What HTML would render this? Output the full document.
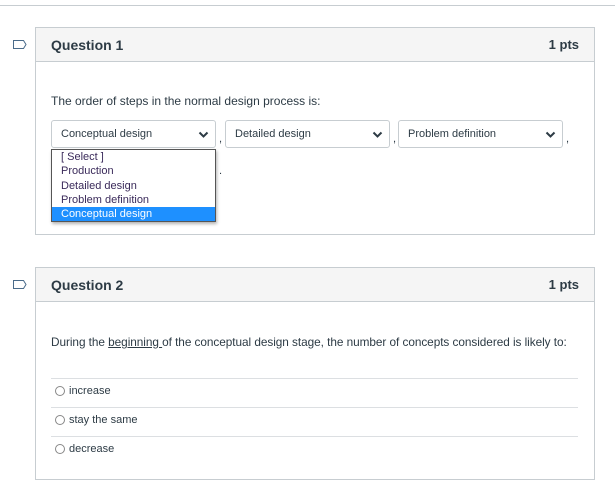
<!DOCTYPE html>
<html><head><style>
*{margin:0;padding:0;box-sizing:border-box}
body{width:615px;height:485px;background:#fff;font-family:"Liberation Sans",sans-serif;color:#2d3b45;position:relative;overflow:hidden}
.abs{position:absolute}
.box{position:absolute;left:35px;width:560px;border:1px solid #c7cdd1;}
.hdr{height:34px;background:#f5f5f5;border-bottom:1px solid #c7cdd1;position:relative}
.hdr .t{position:absolute;left:15px;top:9px;font-size:14px;font-weight:bold}
.hdr .p{position:absolute;right:15px;top:9px;font-size:13px;font-weight:bold}
.sel{position:absolute;top:120px;height:28px;border:1px solid #c7cdd1;border-radius:3px;background:#fff;font-size:11px;padding:7px 9px;color:#2d3b45}
.sel svg{position:absolute;right:6px;top:10px}
.dd{position:absolute;left:51px;top:149px;width:165px;height:73px;border:1px solid #555;background:#fff;font-size:11px;box-shadow:1px 2px 3px rgba(0,0,0,.3)}
.dd div{height:14.3px;line-height:14px;padding-left:9px;color:#3a2a5a}
.dd .h{background:#1e90ff;color:#fff}
.bm{position:absolute;left:13px;width:14px;height:9px}
.ln{position:absolute;left:51px;width:527px;height:1px;background:#dcdfe2}
.opt{position:absolute;left:69px;font-size:11px}
.rad{position:absolute;left:55px;width:10px;height:10px;border:1px solid #888;border-radius:50%}
</style></head><body>
<div class="abs" style="left:0;top:5px;width:615px;height:1px;background:#c7cdd1"></div>
<svg class="bm" style="top:40px" viewBox="0 0 14 9"><path d="M0.5 0.5H10.5L13 4.5L10.5 8.5H0.5Z" fill="none" stroke="#4a6b8a" stroke-width="1"/></svg>
<div class="box" style="top:27px;height:208px"><div class="hdr"><span class="t">Question 1</span><span class="p">1 pts</span></div></div>
<div class="abs" style="left:51px;top:94px;font-size:12px">The order of steps in the normal design process is:</div>
<div class="sel" style="left:51px;width:165px">Conceptual design<svg width="11" height="8" viewBox="0 0 11 8"><path d="M1.5 1.5L5.5 5.5L9.5 1.5" fill="none" stroke="#2d3b45" stroke-width="2"/></svg></div>
<div class="abs" style="left:219px;top:133px;font-size:11px">,</div>
<div class="sel" style="left:225px;width:165px">Detailed design<svg width="11" height="8" viewBox="0 0 11 8"><path d="M1.5 1.5L5.5 5.5L9.5 1.5" fill="none" stroke="#2d3b45" stroke-width="2"/></svg></div>
<div class="abs" style="left:393px;top:133px;font-size:11px">,</div>
<div class="sel" style="left:398px;width:165px">Problem definition<svg width="11" height="8" viewBox="0 0 11 8"><path d="M1.5 1.5L5.5 5.5L9.5 1.5" fill="none" stroke="#2d3b45" stroke-width="2"/></svg></div>
<div class="abs" style="left:566px;top:133px;font-size:11px">,</div>
<div class="abs" style="left:219px;top:165px;font-size:11px">.</div>
<div class="dd"><div>[ Select ]</div><div>Production</div><div>Detailed design</div><div>Problem definition</div><div class="h">Conceptual design</div></div>

<svg class="bm" style="top:280px" viewBox="0 0 14 9"><path d="M0.5 0.5H10.5L13 4.5L10.5 8.5H0.5Z" fill="none" stroke="#4a6b8a" stroke-width="1"/></svg>
<div class="box" style="top:267px;height:213px"><div class="hdr"><span class="t">Question 2</span><span class="p">1 pts</span></div></div>
<div class="abs" style="left:51px;top:335px;font-size:11.8px;letter-spacing:-0.05px;white-space:nowrap">During the <u>beginning </u>of the conceptual design stage, the number of concepts considered is likely to:</div>
<div class="ln" style="top:378px"></div>
<div class="rad" style="top:386px"></div><div class="opt" style="top:385px">increase</div>
<div class="ln" style="top:407px"></div>
<div class="rad" style="top:415px"></div><div class="opt" style="top:414px">stay the same</div>
<div class="ln" style="top:436px"></div>
<div class="rad" style="top:444px"></div><div class="opt" style="top:443px">decrease</div>
</body></html>
